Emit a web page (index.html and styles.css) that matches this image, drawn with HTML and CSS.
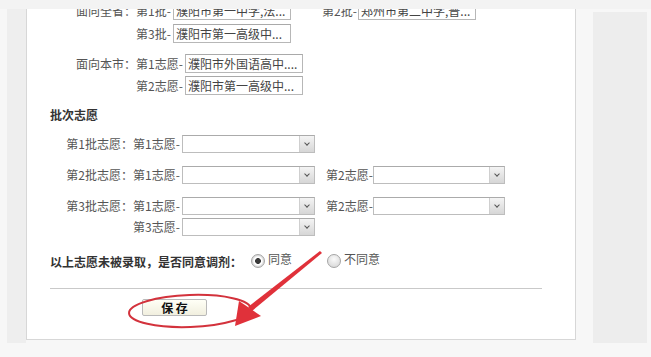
FILE: index.html
```html
<!DOCTYPE html>
<html lang="zh-CN">
<head>
    <meta charset="UTF-8">
    <title>志愿填报</title>
    <link rel="stylesheet" href="styles.css">
</head>
<body>

<div class="topbar"></div>
<div class="layout">
    <div class="strip"></div>
    <div class="panel">
        <div class="sec prov">
            <div class="row first">
                <span class="lbl">面向全省：</span>
                <span class="sub">第1批-</span>
                <input class="txt" type="text" value="濮阳市第一中学,法..." readonly>
                <span class="sub col2">第2批-</span>
                <input class="txt" type="text" value="郑州市第二中学,普..." readonly>
            </div>
            <div class="row">
                <span class="lbl"></span>
                <span class="sub">第3批-</span>
                <input class="txt" type="text" value="濮阳市第一高级中..." readonly>
            </div>
        </div>

        <div class="sec city">
            <div class="row">
                <span class="lbl">面向本市：</span>
                <span class="sub">第1志愿-</span>
                <input class="txt" type="text" value="濮阳市外国语高中...." readonly>
            </div>
            <div class="row">
                <span class="lbl"></span>
                <span class="sub">第2志愿-</span>
                <input class="txt" type="text" value="濮阳市第一高级中..." readonly>
            </div>
        </div>

        <h3 class="title">批次志愿</h3>

        <div class="sec batch">
            <div class="group">
                <div class="row">
                    <span class="lbl">第1批志愿：</span>
                    <span class="sub">第1志愿-</span>
                    <span class="select"><select></select><span class="drop"></span></span>
                </div>
            </div>
            <div class="group">
                <div class="row">
                    <span class="lbl">第2批志愿：</span>
                    <span class="sub">第1志愿-</span>
                    <span class="select"><select></select><span class="drop"></span></span>
                    <span class="sub col2">第2志愿-</span>
                    <span class="select wide2"><select></select><span class="drop"></span></span>
                </div>
            </div>
            <div class="group">
                <div class="row">
                    <span class="lbl">第3批志愿：</span>
                    <span class="sub">第1志愿-</span>
                    <span class="select"><select></select><span class="drop"></span></span>
                    <span class="sub col2">第2志愿-</span>
                    <span class="select wide2"><select></select><span class="drop"></span></span>
                </div>
                <div class="row">
                    <span class="lbl"></span>
                    <span class="sub">第3志愿-</span>
                    <span class="select"><select></select><span class="drop"></span></span>
                </div>
            </div>
        </div>

        <div class="adjust">
            <span class="question">以上志愿未被录取，是否同意调剂：</span>
            <label class="opt"><input type="radio" name="adjust" checked><span>同意</span></label>
            <label class="opt second"><input type="radio" name="adjust"><span>不同意</span></label>
        </div>

        <div class="divider"></div>

        <button class="save">保 存</button>

        <svg class="marks" width="651" height="357" viewBox="0 0 651 357">
            <ellipse cx="190" cy="311" rx="61" ry="16" transform="rotate(-2 190 311)" fill="none" stroke="#d3323c" stroke-width="2"/>
            <polygon points="320,251 322,253 252,311 248,307" fill="#e0313a"/>
            <polygon points="235,326 239,301 261,316" fill="#e0313a"/>
        </svg>
    </div>
    <div class="side"></div>
</div>
<div class="bottom"></div>

</body>
</html>
```

FILE: styles.css
```css
/* Page frame */
body {
    margin: 0;
    background: #f7f7f7;
    font-family: "Noto Sans CJK SC", "Noto Sans", sans-serif;
    font-size: 12px;
    color: #555;
    width: 651px;
    height: 357px;
    overflow: hidden;
    position: relative;
}
.topbar {
    height: 9px;
    background: #f3f3f3;
}
.layout {
    display: flex;
    align-items: flex-start;
    height: 334px;
}
.strip {
    width: 19px;
    margin-left: 7px;
    height: 334px;
    background: #eeeeee;
}
.panel {
    width: 548px;
    height: 330px;
    background: #fff;
    border: 1px solid #d7d7d7;
    border-top: none;
    overflow: hidden;
}
.side {
    width: 54px;
    height: 331px;
    margin-top: 3px;
    margin-left: 17px;
    background: #ededed;
}

/* Form rows */
.row {
    display: flex;
    align-items: center;
    height: 22px;
    white-space: nowrap;
}
.row.first {
    margin-top: -10px;
    height: 23px;
}
.lbl {
    width: 109px;
    text-align: right;
    flex-shrink: 0;
}
.sub {
    flex-shrink: 0;
}
.prov .sub { width: 37px; }
.prov .sub.col2 { width: 36px; margin-left: 31px; }
.city { margin-top: 8px; }
.city .sub { width: 49px; }

.txt {
    box-sizing: border-box;
    width: 118px;
    height: 19px;
    margin: 0;
    padding: 0 2px;
    border: 1px solid #b7b7b7;
    border-top-color: #a9a9a9;
    font-family: inherit;
    font-size: 12px;
    color: #444;
    background: #fff;
    outline: none;
}

.title {
    margin: 9px 0 0 23px;
    height: 20px;
    line-height: 20px;
    font-size: 12px;
    font-weight: bold;
    color: #333;
}

.batch { margin-top: 8px; }
.batch .row { height: 21px; }
.batch .group { margin-bottom: 10px; }
.batch .group:last-child { margin-bottom: 0; }
.batch .lbl { width: 106px; }
.batch .sub { width: 49px; }
.batch .sub.col2 { width: 47px; margin-left: 11px; }

.select {
    position: relative;
    display: block;
    width: 133px;
    height: 18px;
    flex-shrink: 0;
}
.select.wide2 { width: 132px; }
.select select {
    appearance: none;
    box-sizing: border-box;
    width: 100%;
    height: 100%;
    margin: 0;
    border: 1px solid #bdbdbd;
    border-top-color: #ababab;
    background: #fff;
    border-radius: 0;
}
.drop {
    position: absolute;
    top: 1px;
    right: 1px;
    width: 14px;
    height: 16px;
    background: linear-gradient(#f4f4f4, #d6d6d6);
    border-left: 1px solid #cfcfcf;
}
.drop::after {
    content: "";
    position: absolute;
    left: 5px;
    top: 5px;
    width: 3px;
    height: 3px;
    border-right: 1.5px solid #555;
    border-bottom: 1.5px solid #555;
    transform: rotate(45deg);
}

/* Adjust question */
.adjust {
    display: flex;
    align-items: center;
    height: 22px;
    margin: 13px 0 0 23px;
}
.question {
    width: 201px;
    font-weight: bold;
    color: #333;
}
.opt {
    display: flex;
    align-items: center;
}
.opt.second { margin-left: 35px; }
.opt span {
    margin-left: 3px;
    position: relative;
    top: -3px;
}
.opt input {
    appearance: none;
    width: 14px;
    height: 14px;
    margin: 0;
    border: 1px solid #a5a5a5;
    border-radius: 50%;
    background: radial-gradient(circle at 50% 35%, #fafafa, #d2d2d2);
    box-sizing: border-box;
}
.opt input:checked {
    background: radial-gradient(circle, #3a3a3a 0 2.6px, #fff 3.2px 4px, #dcdcdc 5.5px);
}

.divider {
    height: 1px;
    margin: 16px 0 0 23px;
    width: 492px;
    background: #c9c9c9;
}

.save {
    display: block;
    width: 65px;
    height: 17px;
    margin: 10px 0 0 115px;
    padding: 0;
    border: 1px solid #b9b9b9;
    border-radius: 2px;
    background: linear-gradient(#fffff6, #f1efdf);
    font-family: inherit;
    font-size: 12px;
    font-weight: bold;
    color: #111;
    line-height: 15px;
}

/* Annotation drawn over the form */
.marks {
    position: absolute;
    left: 0;
    top: 0;
    pointer-events: none;
}

.bottom {
    height: 14px;
}
```
